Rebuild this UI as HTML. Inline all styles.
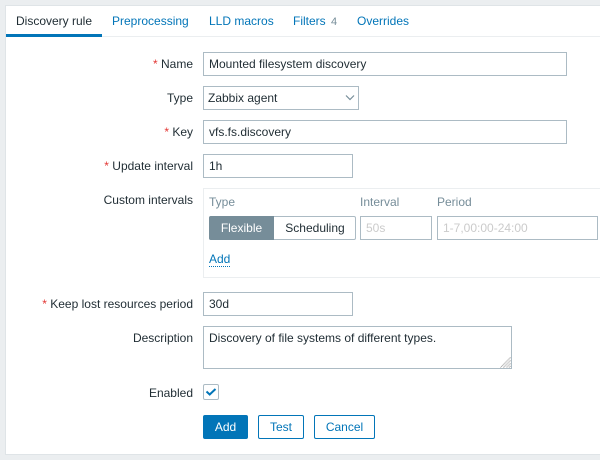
<!DOCTYPE html>
<html><head><meta charset="utf-8"><style>
html,body{margin:0;padding:0}
body{width:600px;height:460px;overflow:hidden;background:#ebeef0;position:relative;font:12px/14px "Liberation Sans",Arial,sans-serif;color:#1f2c33}
#c{position:absolute;left:5px;top:5px;width:600px;height:448px;background:#fff;border:1px solid #dfe4e7}
.a{position:absolute;white-space:nowrap}
.t{top:14px;line-height:14px;color:#0275b8}
.l{position:absolute;right:407px;white-space:nowrap;line-height:14px}
.l i{color:#e33734;font-style:normal}
.i{position:absolute;box-sizing:border-box;border:1px solid #acbbc4;background:#fff;height:24px;line-height:22px;padding-left:5px;white-space:nowrap;overflow:hidden}
.h{color:#768d99;top:195px;line-height:14px}
.b{position:absolute;box-sizing:border-box;height:24px;top:415px;border:1px solid #0275b8;border-radius:2px;color:#0275b8;background:#fff;text-align:center;line-height:22px}
.p{color:#cbcbcb}
</style></head><body>
<div id="c"></div>
<div class="a" style="left:6px;top:36px;width:594px;height:1px;background:#ebeef0"></div>
<div class="a" style="left:6px;top:34px;width:96px;height:3px;background:#0275b8"></div>
<div class="a t" style="left:16px;color:#1f2c33">Discovery rule</div>
<div class="a t" style="left:112px">Preprocessing</div>
<div class="a t" style="left:209px">LLD macros</div>
<div class="a t" style="left:293px">Filters</div>
<div class="a t" style="left:331px;top:15px;color:#768d99;font-size:11px">4</div>
<div class="a t" style="left:357px">Overrides</div>

<div class="l" style="top:57px"><i>*</i> Name</div>
<div class="i" style="left:203px;top:52px;width:364px">Mounted filesystem discovery</div>
<div class="l" style="top:91px">Type</div>
<div class="i" style="left:203px;top:86px;width:156px;padding-left:4px">Zabbix agent</div>
<svg class="a" style="left:345px;top:94px" width="10" height="7" viewBox="0 0 10 7"><path d="M1 1.5L5 5.5L9 1.5" fill="none" stroke="#768d99" stroke-width="1.2"/></svg>
<div class="l" style="top:125px"><i>*</i> Key</div>
<div class="i" style="left:203px;top:120px;width:364px">vfs.fs.discovery</div>
<div class="l" style="top:159px"><i>*</i> Update interval</div>
<div class="i" style="left:203px;top:154px;width:150px">1h</div>
<div class="l" style="top:193px">Custom intervals</div>

<div class="a" style="left:203px;top:188px;width:397px;height:90px;box-sizing:border-box;border:1px solid #ebeef0;border-right:0"></div>
<div class="a h" style="left:209px">Type</div>
<div class="a h" style="left:360px">Interval</div>
<div class="a h" style="left:437px">Period</div>
<div class="a" style="left:209px;top:216px;width:147px;height:24px;box-sizing:border-box;border:1px solid #acbbc4;border-radius:2px;background:#fff"></div>
<div class="a" style="left:209px;top:216px;width:65px;height:24px;background:#768d99;border-radius:2px 0 0 2px;color:#fff;text-align:center;line-height:24px">Flexible</div>
<div class="a" style="left:274px;top:216px;width:82px;height:24px;text-align:center;line-height:24px">Scheduling</div>
<div class="i p" style="left:360px;top:216px;width:72px">50s</div>
<div class="i p" style="left:437px;top:216px;width:161px">1-7,00:00-24:00</div>
<div class="a" style="left:209px;top:252px;color:#0275b8;border-bottom:1px dotted #0275b8;line-height:14px">Add</div>

<div class="l" style="top:297px"><i>*</i> Keep lost resources period</div>
<div class="i" style="left:203px;top:292px;width:150px">30d</div>
<div class="l" style="top:331px">Description</div>
<div class="i" style="left:203px;top:326px;width:309px;height:43px;line-height:14px;padding-top:4px">Discovery of file systems of different types.</div>
<svg class="a" style="left:499px;top:356px" width="12" height="12" viewBox="0 0 12 12"><path d="M11.5 1.5L1.5 11.5M11.5 4.5L4.5 11.5M11.5 7.5L7.5 11.5M11.5 10L10 11.5" stroke="#999" stroke-width="1" stroke-dasharray="1 .5" fill="none"/></svg>
<div class="l" style="top:386px">Enabled</div>
<div class="a" style="left:203px;top:384px;width:16px;height:16px;box-sizing:border-box;border:1px solid #acbbc4;border-radius:2px"></div>
<svg class="a" style="left:205px;top:386px" width="12" height="12" viewBox="0 0 12 12"><path d="M1.5 5.5L4.7 8.5L10.5 3" fill="none" stroke="#0275b8" stroke-width="2"/></svg>
<div class="b" style="left:203px;width:45px;background:#0275b8;color:#fff">Add</div>
<div class="b" style="left:258px;width:46px">Test</div>
<div class="b" style="left:314px;width:61px">Cancel</div>
</body></html>
